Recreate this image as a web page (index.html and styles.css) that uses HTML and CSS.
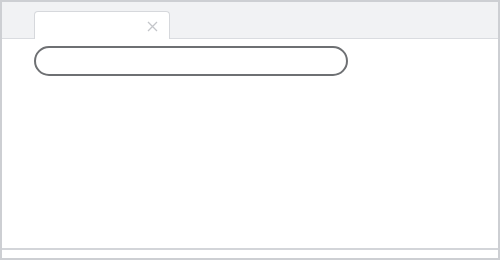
FILE: index.html
```html
<!DOCTYPE html>
<html>
<head>
<meta charset="utf-8">
<link rel="stylesheet" href="styles.css">
</head>
<body>
<div class="frame">
  <div class="toolbar">
    <div class="tab">
      <span class="tab-title"></span>
      <svg class="tab-close" width="11" height="11" viewBox="0 0 11 11">
        <path d="M1 1 L10 10 M10 1 L1 10" stroke="#c4c6ca" stroke-width="1.3" fill="none"/>
      </svg>
    </div>
  </div>
  <div class="content">
    <input class="search" type="text">
  </div>
  <div class="footer"></div>
</div>
</body>
</html>
```
FILE: styles.css
```css
html, body {
  margin: 0;
  padding: 0;
  background: #ffffff;
  font-family: "Liberation Sans", Arial, sans-serif;
}
.frame {
  box-sizing: border-box;
  width: 500px;
  height: 260px;
  border: 2px solid #cdcfd3;
  display: flex;
  flex-direction: column;
  background: #ffffff;
}
.toolbar {
  box-sizing: border-box;
  height: 37px;
  background: #f1f2f4;
  border-bottom: 1px solid #dadce0;
  padding: 9px 0 0 32px;
  display: flex;
  align-items: flex-end;
}
.tab {
  box-sizing: border-box;
  width: 136px;
  height: 28px;
  margin-bottom: -1px;
  background: #ffffff;
  border: 1px solid #d6d8dc;
  border-bottom: none;
  border-radius: 4px 4px 0 0;
  display: flex;
  align-items: center;
  justify-content: flex-end;
  padding: 2px 11px 0 0;
}
.tab-close {
  display: block;
}
.content {
  flex: 1;
  padding: 7px 0 0 32px;
}
.search {
  box-sizing: border-box;
  display: block;
  width: 314px;
  height: 30px;
  margin: 0;
  border: 2px solid #6e7073;
  border-radius: 15px;
  background: #ffffff;
  outline: none;
  padding: 0 12px;
}
.footer {
  height: 8px;
  border-top: 2px solid #d3d5d9;
}
```
